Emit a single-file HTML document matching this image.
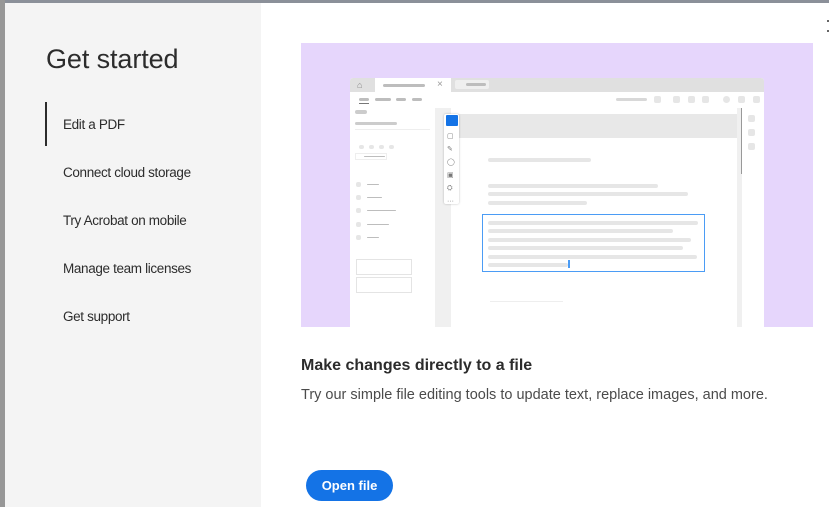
<!DOCTYPE html>
<html><head><meta charset="utf-8"><style>
*{margin:0;padding:0;box-sizing:border-box}
body{width:829px;height:507px;overflow:hidden;background:#fff;font-family:"Liberation Sans",sans-serif;position:relative}
div{position:absolute}
.g{background:#e6e6e6;border-radius:2px}
.d{background:#bdbdbd;border-radius:2px}
.nav{left:63px;font-size:13.5px;letter-spacing:-0.35px;color:#2c2c2c}
</style></head><body>
<div style="left:0;top:0;width:829px;height:3px;background:#8b9099"></div>
<div style="left:0;top:0;width:5px;height:507px;background:#979797"></div>
<div style="left:5px;top:3px;width:256px;height:504px;background:#f4f4f4"></div>
<div style="left:46px;top:44px;font-size:27px;color:#2c2c2c;letter-spacing:-0.1px">Get started</div>
<div style="left:45px;top:102px;width:2px;height:44px;background:#2c2c2c"></div>
<div class="nav" style="top:117px">Edit a PDF</div>
<div class="nav" style="top:165px">Connect cloud storage</div>
<div class="nav" style="top:213px">Try Acrobat on mobile</div>
<div class="nav" style="top:261px">Manage team licenses</div>
<div class="nav" style="top:309px">Get support</div>
<div style="left:827px;top:20px;width:2px;height:2px;background:#666"></div>
<div style="left:827px;top:30px;width:2px;height:2px;background:#666"></div>

<div style="left:301px;top:43px;width:512px;height:284px;background:#e6d6fc;overflow:hidden">
 <div style="left:49px;top:35px;width:414px;height:260px;background:#fff;border-radius:3px 3px 0 0;overflow:hidden">
  <div style="left:0;top:0;width:414px;height:14px;background:#e0e0e0"></div>
  <div style="left:25px;top:0;width:76px;height:15px;background:#fff"></div>
  <div class="d" style="left:33px;top:6px;width:42px;height:3px"></div>
  <div style="left:87px;top:1px;font-size:10px;color:#999">×</div>
  <div style="left:7px;top:2px;font-size:9px;color:#888">⌂</div>
  <div style="left:105px;top:2px;width:34px;height:9px;background:#efefef;border-radius:2px"></div>
  <div class="d" style="left:116px;top:5px;width:20px;height:3px"></div>
  <div class="d" style="left:9px;top:20px;width:10px;height:3px"></div>
  <div style="left:9px;top:25px;width:10px;height:1px;background:#777"></div>
  <div class="d" style="left:25px;top:20px;width:16px;height:3px"></div>
  <div class="d" style="left:46px;top:20px;width:10px;height:3px"></div>
  <div class="d" style="left:62px;top:20px;width:10px;height:3px"></div>
  <div style="left:266px;top:20px;width:31px;height:3px;background:#d8d8d8;border-radius:2px"></div>
  <div class="g" style="left:304px;top:18px;width:7px;height:7px"></div>
  <div class="g" style="left:323px;top:18px;width:7px;height:7px"></div>
  <div class="g" style="left:338px;top:18px;width:7px;height:7px"></div>
  <div class="g" style="left:352px;top:18px;width:7px;height:7px"></div>
  <div class="g" style="left:373px;top:18px;width:7px;height:7px;border-radius:50%"></div>
  <div class="g" style="left:388px;top:18px;width:7px;height:7px"></div>
  <div class="g" style="left:403px;top:18px;width:7px;height:7px"></div>
  <div class="d" style="left:5px;top:32px;width:12px;height:4px;background:#ccc"></div>
  <div class="d" style="left:5px;top:44px;width:42px;height:3px;background:#ccc"></div>
  <div style="left:5px;top:51px;width:75px;height:1px;background:#eee"></div>
  <div class="g" style="left:9px;top:67px;width:5px;height:4px"></div>
  <div class="g" style="left:19px;top:67px;width:5px;height:4px"></div>
  <div class="g" style="left:29px;top:67px;width:5px;height:4px"></div>
  <div class="g" style="left:39px;top:67px;width:5px;height:4px"></div>
  <div style="left:5px;top:75px;width:32px;height:7px;border:1px solid #eee"></div>
  <div class="d" style="left:14px;top:78px;width:21px;height:1px"></div>
  <div class="g" style="left:6px;top:104px;width:5px;height:5px"></div><div class="d" style="left:17px;top:106px;width:12px;height:1px"></div>
  <div class="g" style="left:6px;top:117px;width:5px;height:5px"></div><div class="d" style="left:17px;top:119px;width:15px;height:1px"></div>
  <div class="g" style="left:6px;top:130px;width:5px;height:5px"></div><div class="d" style="left:17px;top:132px;width:29px;height:1px"></div>
  <div class="g" style="left:6px;top:144px;width:5px;height:5px"></div><div class="d" style="left:17px;top:146px;width:22px;height:1px"></div>
  <div class="g" style="left:6px;top:157px;width:5px;height:5px"></div><div class="d" style="left:17px;top:159px;width:12px;height:1px"></div>
  <div style="left:6px;top:181px;width:56px;height:16px;border:1px solid #e4e4e4"></div>
  <div style="left:6px;top:199px;width:56px;height:16px;border:1px solid #e4e4e4"></div>
  <div style="left:85px;top:30px;width:16px;height:230px;background:#f0f0f0"></div>
  <div style="left:101px;top:36px;width:286px;height:24px;background:#e8e8e8"></div>
  <div style="left:387px;top:30px;width:5px;height:230px;background:#f0f0f0"></div>
  <div style="left:391px;top:30px;width:1px;height:66px;background:#999"></div>
  <div class="g" style="left:398px;top:37px;width:7px;height:7px"></div>
  <div class="g" style="left:398px;top:51px;width:7px;height:7px"></div>
  <div class="g" style="left:398px;top:65px;width:7px;height:7px"></div>
  <div style="left:94px;top:36px;width:15px;height:90px;background:#fff;box-shadow:0 0 2px rgba(0,0,0,.25);border-radius:2px"></div>
  <div style="left:96px;top:37px;width:12px;height:11px;background:#1473e6;border-radius:1px"></div>
  <div style="left:97px;top:52px;font-size:7px;color:#777;line-height:13px">▢<br>✎<br>◯<br>▣<br>⛭<br>···</div>
  <div class="g" style="left:138px;top:80px;width:103px;height:4px"></div>
  <div class="g" style="left:138px;top:106px;width:170px;height:4px"></div>
  <div class="g" style="left:138px;top:114px;width:200px;height:4px"></div>
  <div class="g" style="left:138px;top:123px;width:99px;height:4px"></div>
  <div style="left:132px;top:136px;width:223px;height:58px;border:1px solid #4b9cf5"></div>
  <div class="g" style="left:138px;top:143px;width:210px;height:4px"></div>
  <div class="g" style="left:138px;top:151px;width:185px;height:4px"></div>
  <div class="g" style="left:138px;top:160px;width:203px;height:4px"></div>
  <div class="g" style="left:138px;top:168px;width:195px;height:4px"></div>
  <div class="g" style="left:138px;top:177px;width:209px;height:4px"></div>
  <div class="g" style="left:138px;top:185px;width:80px;height:4px"></div>
  <div style="left:218px;top:182px;width:2px;height:8px;background:#4b9cf5"></div>
  <div style="left:140px;top:223px;width:73px;height:1px;background:#eee"></div>
 </div>
</div>
<div style="left:301px;top:357px;font-size:16px;font-weight:bold;color:#2c2c2c">Make changes directly to a file</div>
<div style="left:301px;top:387px;font-size:14.5px;color:#4b4b4b">Try our simple file editing tools to update text, replace images, and more.</div>
<div style="left:306px;top:470px;width:87px;height:31px;background:#1473e6;border-radius:16px;color:#fff;font-size:13px;font-weight:bold;text-align:center;line-height:31px">Open file</div>
</body></html>
